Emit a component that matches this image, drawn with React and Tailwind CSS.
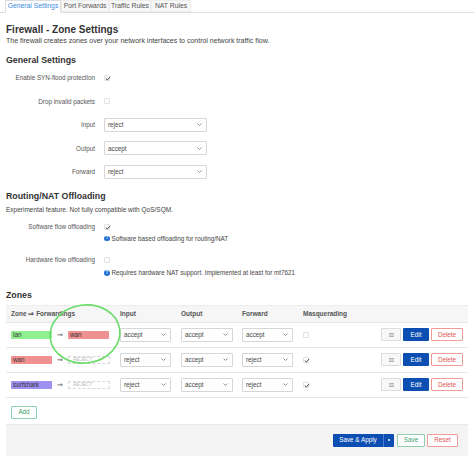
import React from "react";

const Chevron = () => (
  <svg width="5" height="3" viewBox="0 0 5 3" className="shrink-0">
    <polyline points="0.5,0.5 2.5,2.5 4.5,0.5" fill="none" stroke="#777" strokeWidth="0.8" />
  </svg>
);

const Select = ({ value, w = "w-[103px]" }) => (
  <div className={`flex items-center justify-between h-[14px] ${w} border border-[#d6d6d6] rounded-[1px] pl-[3px] pr-[4px] text-[6.3px] text-[#444] bg-white`}>
    <span>{value}</span>
    <Chevron />
  </div>
);

const Check = ({ checked }) => (
  <div className="relative w-[6px] h-[6px] border border-[#e2e2e2] rounded-[1px] bg-white">
    {checked && (
      <svg width="6" height="5" viewBox="0 0 6 5" className="absolute left-[0px] top-[0px]">
        <polyline points="0.8,2.6 2.3,4 5.2,0.9" fill="none" stroke="#333" strokeWidth="0.9" />
      </svg>
    )}
  </div>
);

const Help = ({ children }) => (
  <div className="flex items-center gap-[2px] text-[6.3px] text-[#444]">
    <div className="w-[5.5px] h-[5.5px] rounded-full bg-[#1f6fd0] text-white text-[4.5px] font-bold flex items-center justify-center leading-none">?</div>
    <span>{children}</span>
  </div>
);

const Row = ({ label, children, h = "h-[23.5px]" }) => (
  <div className={`flex items-center ${h}`}>
    <div className="w-[89px] text-right text-[6.3px] text-[#555] whitespace-nowrap">{label}</div>
    <div className="ml-[9px] flex items-center">{children}</div>
  </div>
);

const Badge = ({ name, color }) => (
  <div className={`w-[41px] h-[8px] ${color} rounded-[1px] text-[6.3px] leading-[8px] pl-[2px] text-[#333]`}>{name}</div>
);

const Reject = () => (
  <div className="w-[42px] h-[8px] border border-dashed border-[#d8d8d8] rounded-[1px] flex items-center pl-[4px]">
    <span className="text-[5px] leading-none italic text-[#bdbdbd]">REJECT</span>
  </div>
);

const ZoneRow = ({ zone, color, fwd, input, output, forward, masq }) => (
  <div className="grid grid-cols-[112px_61px_61px_61px_60px_1fr] h-[25px] items-center border-t border-[#e6e6e6]">
    <div className="pl-[5px] flex items-center">
      <Badge name={zone} color={color} />
      <span className="mx-[5px] text-[7px] leading-none text-[#555]">⇒</span>
      {fwd ? <Badge name={fwd} color="bg-[#f09090]" /> : <Reject />}
    </div>
    <div className="pl-[2px]"><Select value={input} w="w-[51px]" /></div>
    <div className="pl-[2px]"><Select value={output} w="w-[52px]" /></div>
    <div className="pl-[2px]"><Select value={forward} w="w-[51px]" /></div>
    <div className="pl-[2px]"><Check checked={masq} /></div>
    <div className="flex justify-end items-center pr-[5px] gap-[2px]">
      <div className="w-[20px] h-[13px] border border-[#dcdcdc] rounded-[1px] bg-[#f8f8f8] flex items-center justify-center">
        <svg width="5" height="4" viewBox="0 0 5 4">
          <line x1="0" y1="0.5" x2="5" y2="0.5" stroke="#888" strokeWidth="0.6" />
          <line x1="0" y1="2" x2="5" y2="2" stroke="#888" strokeWidth="0.6" />
          <line x1="0" y1="3.5" x2="5" y2="3.5" stroke="#888" strokeWidth="0.6" />
        </svg>
      </div>
      <div className="w-[26px] h-[13px] rounded-[1px] bg-[#0d4eb3] text-white text-[6.3px] flex items-center justify-center">Edit</div>
      <div className="w-[32px] h-[13px] rounded-[1px] border border-[#f09a9a] bg-white text-[#e05555] text-[6.3px] flex items-center justify-center">Delete</div>
    </div>
  </div>
);

export default function App() {
  return (
    <div className="relative w-[474px] h-[458px] bg-white overflow-hidden font-['Liberation_Sans',Arial,sans-serif] text-[#404040]">
      {/* Tabs */}
      <div className="flex items-end h-[13px] border-b border-[#dddddd] pl-[5px] text-[6.8px]">
        <div className="w-[56px] h-[13px] flex items-center justify-center border border-[#dddddd] border-b-white bg-white text-[#3d8ce0] -mb-[1px] whitespace-nowrap">General Settings</div>
        <div className="w-[48px] h-[12px] flex items-center justify-center border border-[#eeeeee] bg-[#f7f7f7] text-[#555] whitespace-nowrap">Port Forwards</div>
        <div className="w-[42px] h-[12px] flex items-center justify-center border border-[#eeeeee] bg-[#f7f7f7] text-[#555] whitespace-nowrap">Traffic Rules</div>
        <div className="w-[40px] h-[12px] flex items-center justify-center border border-[#eeeeee] bg-[#f7f7f7] text-[#555] whitespace-nowrap">NAT Rules</div>
      </div>

      <div className="px-[6px]">
        <div className="mt-[10px] h-[14px] leading-[14px] text-[10px] font-bold text-[#333]">Firewall - Zone Settings</div>
        <div className="h-[8px] leading-[8px] text-[7px] text-[#444] whitespace-nowrap">The firewall creates zones over your network interfaces to control network traffic flow.</div>

        <div className="mt-[10px] h-[10px] leading-[10px] text-[8.8px] font-bold text-[#333]">General Settings</div>
        <div className="mt-[1px]">
          <Row label="Enable SYN-flood protection"><Check checked /></Row>
          <Row label="Drop invalid packets"><Check /></Row>
          <Row label="Input"><Select value="reject" /></Row>
          <Row label="Output"><Select value="accept" /></Row>
          <Row label="Forward"><Select value="reject" /></Row>
        </div>

        <div className="mt-[7.5px] h-[10px] leading-[10px] text-[8.8px] font-bold text-[#333]">Routing/NAT Offloading</div>
        <div className="mt-[5px] h-[8px] leading-[8px] text-[6.5px] text-[#444]">Experimental feature. Not fully compatible with QoS/SQM.</div>
        <div className="mt-[6.7px]">
          <Row label="Software flow offloading" h="h-[12px]"><Check checked /></Row>
          <div className="h-[12px] flex items-center pl-[98px]"><Help>Software based offloading for routing/NAT</Help></div>
          <div className="mt-[9px]">
            <Row label="Hardware flow offloading" h="h-[12px]"><Check /></Row>
          </div>
          <div className="mt-[1.3px] h-[12px] flex items-center pl-[98px]"><Help>Requires hardware NAT support. Implemented at least for mt7621</Help></div>
        </div>

        <div className="mt-[11.4px] h-[10px] leading-[10px] text-[8.8px] font-bold text-[#333]">Zones</div>
        <div className="mt-[4.3px]">
          <div className="grid grid-cols-[112px_61px_61px_61px_60px_1fr] h-[17px] items-center bg-[#f6f6f6] border-t border-[#ececec] text-[6.5px] font-bold text-[#555]">
            <div className="pl-[5px]">Zone ⇒ Forwardings</div>
            <div className="pl-[2px]">Input</div>
            <div className="pl-[2px]">Output</div>
            <div className="pl-[2px]">Forward</div>
            <div className="pl-[2px]">Masquerading</div>
            <div />
          </div>
          <ZoneRow zone="lan" color="bg-[#90f090]" fwd="wan" input="accept" output="accept" forward="accept" masq={false} />
          <ZoneRow zone="wan" color="bg-[#f09090]" input="reject" output="accept" forward="reject" masq />
          <ZoneRow zone="surfshark" color="bg-[#9c90f0]" input="reject" output="accept" forward="reject" masq />
          <div className="border-t border-[#e6e6e6]" />
        </div>

        <div className="mt-[8px] ml-[5px] w-[26px] h-[13px] rounded-[1px] border border-[#8fcfae] text-[#3f9f6f] text-[6.3px] flex items-center justify-center">Add</div>

        <div className="mt-[5px] h-[32px] bg-[#f4f4f4] border-t border-[#e8e8e8] flex items-center justify-end pr-[10px]">
          <div className="flex h-[13px] rounded-[1px] bg-[#0d4eb3] text-white text-[6.3px]">
            <div className="w-[50px] flex items-center justify-center">Save &amp; Apply</div>
            <div className="w-[11px] border-l border-[#4a7fcf] flex items-center justify-center">
              <div className="w-[1.5px] h-[1.5px] bg-white rounded-full" />
            </div>
          </div>
          <div className="ml-[3px] w-[28px] h-[13px] rounded-[1px] border border-[#8fcfae] bg-white text-[#3f9f6f] text-[6.3px] flex items-center justify-center">Save</div>
          <div className="ml-[2px] w-[31px] h-[13px] rounded-[1px] border border-[#f09a9a] bg-white text-[#e05555] text-[6.3px] flex items-center justify-center">Reset</div>
        </div>
      </div>

      <svg className="absolute left-0 top-0 pointer-events-none" width="474" height="458">
        <ellipse cx="85" cy="334" rx="35" ry="29" fill="none" stroke="#6cdc6c" strokeWidth="1.6" transform="rotate(-8 85 334)" />
      </svg>
    </div>
  );
}
